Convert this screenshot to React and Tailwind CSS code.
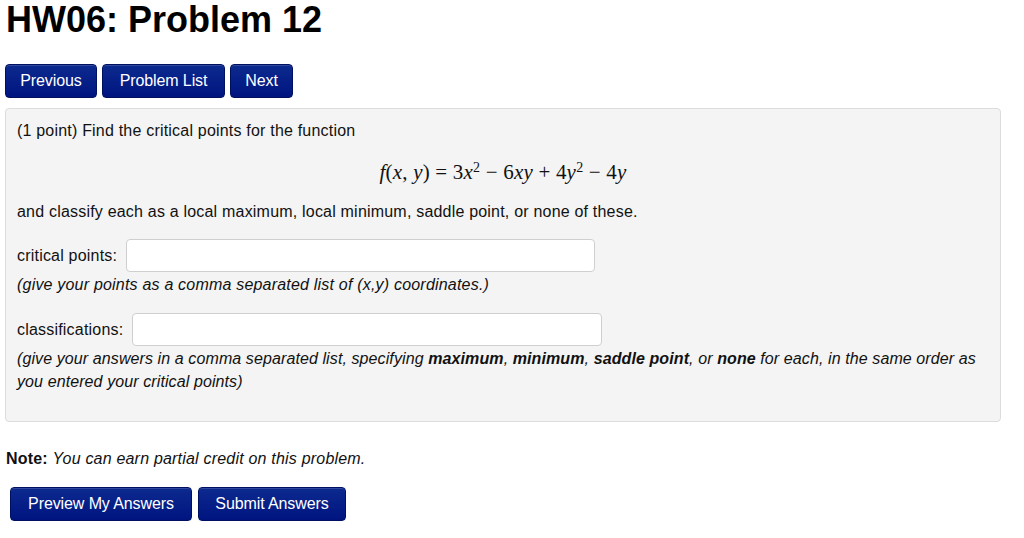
import React from 'react';

const font = { fontFamily: '"Liberation Sans", Arial, Helvetica, sans-serif' };

const NavButton = ({ children, className = '' }) => (
  <button
    type="button"
    className={`h-[34px] rounded-[4px] border border-[#001060] bg-[linear-gradient(180deg,#0c2a8e,#001480)] text-[16px] tracking-[-0.1px] text-white shadow-[inset_0_1px_0_rgba(255,255,255,0.15)] ${className}`}
  >
    {children}
  </button>
);

const Formula = () => (
  <div className="flex justify-center pt-[18px] pb-[16px] text-[21px] leading-[24px] text-[#111]" style={{ fontFamily: '"Liberation Serif", "Times New Roman", serif' }}>
    <span>
      <i>f</i>(<i>x</i>, <i>y</i>) = 3<i>x</i><sup className="text-[14px]">2</sup> − 6<i>xy</i> + 4<i>y</i><sup className="text-[14px]">2</sup> − 4<i>y</i>
    </span>
  </div>
);

export default function App() {
  return (
    <div className="min-h-screen bg-white text-[16px] tracking-[0.2px] text-[#111]" style={font}>
      <h1 className="pl-[6px] text-[36px] font-bold leading-[40px] tracking-normal text-black">HW06: Problem 12</h1>

      <div className="mt-[24px] flex gap-[5px] pl-[5px]">
        <NavButton className="w-[92px]">Previous</NavButton>
        <NavButton className="w-[123px]">Problem List</NavButton>
        <NavButton className="w-[63px]">Next</NavButton>
      </div>

      <div className="mx-[5px] mt-[10px] h-[314px] w-[996px] rounded-[4px] border border-[#dcdcdc] bg-[#f4f4f4] px-[11px] pt-[10px] leading-[23px]">
        <p>(1 point) Find the critical points for the function</p>
        <Formula />
        <p>and classify each as a local maximum, local minimum, saddle point, or none of these.</p>

        <div className="mt-[16px] flex items-center gap-[9px]">
          <span>critical points:</span>
          <input type="text" className="h-[33px] w-[469px] rounded-[4px] border border-[#cfcfcf] bg-white" />
        </div>
        <p className="mt-[1px] italic">(give your points as a comma separated list of (x,y) coordinates.)</p>

        <div className="mt-[17px] flex items-center gap-[9px]">
          <span>classifications:</span>
          <input type="text" className="h-[33px] w-[470px] rounded-[4px] border border-[#cfcfcf] bg-white" />
        </div>
        <p className="mt-[1px] w-[968px] italic tracking-[0.1px]">
          (give your answers in a comma separated list, specifying <b>maximum</b>, <b>minimum</b>, <b>saddle point</b>, or <b>none</b> for each, in the same order as you entered your critical points)
        </p>
      </div>

      <p className="mt-[25px] pl-[6px]">
        <b>Note:</b> <i>You can earn partial credit on this problem.</i>
      </p>

      <div className="mt-[16px] flex gap-[6px] pl-[10px]">
        <NavButton className="w-[182px]">Preview My Answers</NavButton>
        <NavButton className="w-[148px]">Submit Answers</NavButton>
      </div>
    </div>
  );
}
